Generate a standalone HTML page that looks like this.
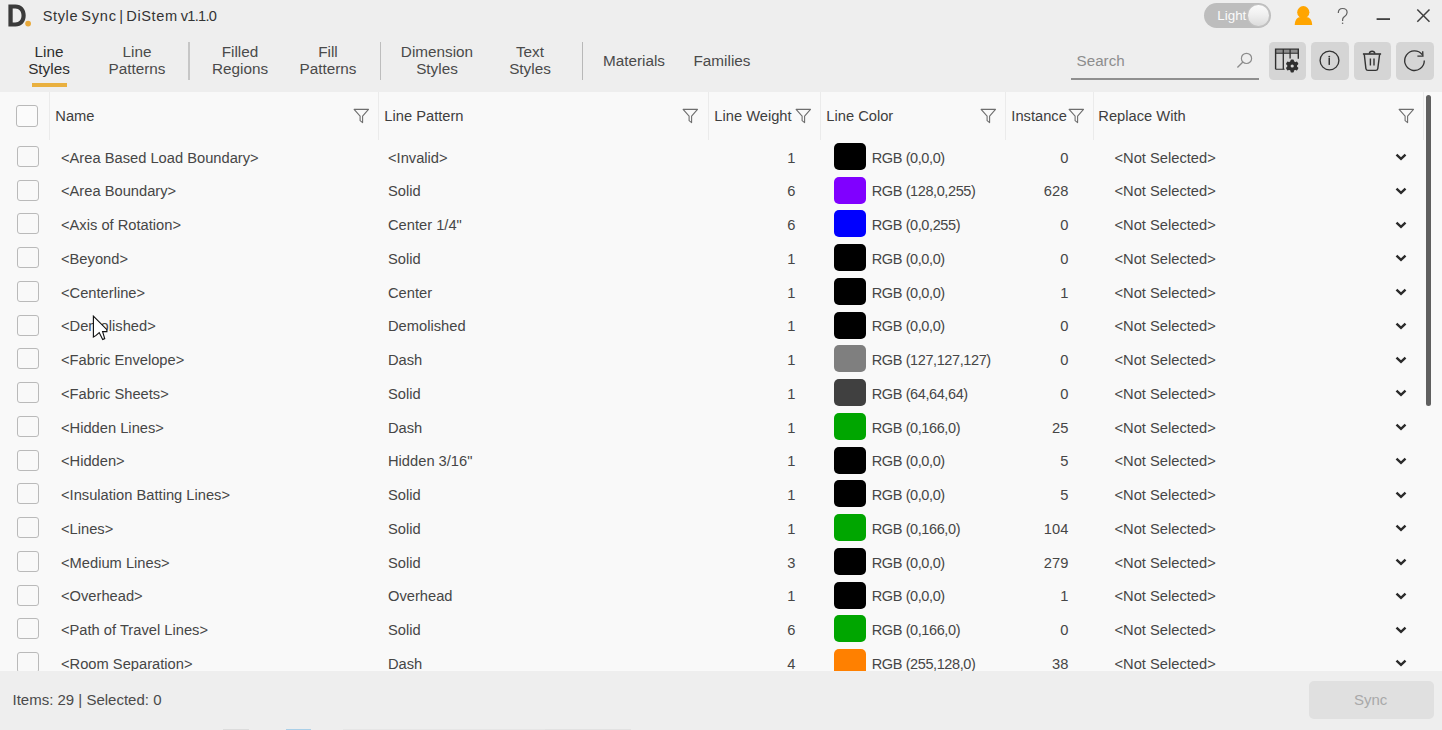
<!DOCTYPE html>
<html><head><meta charset="utf-8">
<style>
*{margin:0;padding:0;box-sizing:border-box}
html,body{width:1442px;height:730px;overflow:hidden;background:#eeeeee;
  font-family:"Liberation Sans",sans-serif;color:#333}
.abs{position:absolute}
#logo{position:absolute;left:6.5px;top:-1.5px;font-size:31.5px;line-height:36px;font-weight:bold;color:#3b3b3b}
#dot{position:absolute;left:25.3px;top:20.8px;width:5.6px;height:5.6px;border-radius:50%;background:#e9a93a}
#title{position:absolute;left:43px;top:7px;font-size:14.6px;line-height:18px;color:#333;white-space:nowrap}
#toggle{position:absolute;left:1204px;top:3px;width:67px;height:25px;border-radius:13px;background:#bdbdbd}
#toggle span{position:absolute;left:13.3px;top:5.2px;font-size:13.4px;line-height:16px;color:#fbfbfb}
#knob{position:absolute;left:1248.3px;top:5.4px;width:20.4px;height:20.4px;border-radius:50%;
  background:linear-gradient(#fbfbfb 0,#f0f0f0 45%,#dcdcdc 100%);box-shadow:0 0 0 1px #c2c2c2}
.tab{position:absolute;text-align:center;font-size:15.3px;line-height:17px;color:#4a4a4a;white-space:nowrap}
.tab.act{color:#2e2e2e}
.sep{position:absolute;top:42px;width:1.2px;height:37.8px;background:#bdbdbd}
#ul{position:absolute;left:32px;top:83px;width:35px;height:4px;background:#e9b03f}
#search{position:absolute;left:1076.6px;top:52px;font-size:15.2px;line-height:18px;color:#8d8d8d}
#sline{position:absolute;left:1071px;top:78.3px;width:188px;height:1.6px;background:#8f8f8f}
.btn{position:absolute;top:42px;height:38px;border-radius:4.5px;background:#d5d5d5}
#table{position:absolute;left:0;top:92px;width:1442px;height:579px;background:#f9f9f9;overflow:hidden}
#shadow{position:absolute;left:0;top:92px;width:1442px;height:4px;background:linear-gradient(#ececec,#f9f9f9)}
.hd{position:absolute;top:0;height:48px}
.csep{position:absolute;top:0;width:1px;height:48px;background:#ebebeb}
.ht{position:absolute;margin-left:-0.7px;top:16.3px;font-size:14.7px;line-height:17px;color:#3e3e3e;white-space:nowrap}
.fn{position:absolute;top:15.6px;margin-left:-0.8px}
.hcb{position:absolute;left:16.1px;top:12.8px;width:21.7px;height:22px;border:1.2px solid #b9b9b9;border-radius:3px;background:#fbfbfb}
.row{position:absolute;left:0;width:1442px;height:33.75px}
.cb{position:absolute;left:17.2px;top:6px;width:21.5px;height:20.6px;border:1.2px solid #bababa;border-radius:3px}
.t{position:absolute;top:10px;font-size:14.7px;line-height:17px;color:#464646;white-space:nowrap}
.nm{left:61px}
.pt{left:388px}
.wt{right:646.5px}
.rgb{left:871.8px;font-size:14.5px;letter-spacing:-0.4px}
.inst{right:373.70000000000005px}
.rep{left:1114.5px}
.sw{position:absolute;left:834px;top:3px;width:32px;height:27px;border-radius:5px}
.chev{position:absolute;left:1394.5px;top:13px}
#sb{position:absolute;left:1426px;top:3px;width:5px;height:311px;border-radius:2.5px;background:#606060}
#footer{position:absolute;left:0;top:671px;width:1442px;height:59px;background:#eeeeee}
#items{position:absolute;left:12.5px;top:20px;font-size:15px;line-height:17px;color:#4a4a4a;white-space:nowrap}
#sync{position:absolute;left:1309px;top:10px;width:125px;height:38px;border-radius:5px;background:#e0e0e0}
#sync span{position:absolute;left:45px;top:10px;font-size:15px;line-height:17px;color:#a9a9a9}
</style></head><body>
<svg class="abs" style="left:0;top:0" width="36" height="32" viewBox="0 0 36 32">
  <path fill-rule="evenodd" fill="#3b3b3b" d="M8.4,4.6 H15.4 C21.7,4.6 25.7,9.1 25.7,15.6 C25.7,22.1 21.7,26.6 15.4,26.6 H8.4 Z M12.7,8.6 H15.2 C19.3,8.6 21.5,11.5 21.5,15.6 C21.5,19.7 19.3,22.6 15.2,22.6 H12.7 Z"/>
  <circle cx="28.1" cy="23.6" r="2.9" fill="#e9a93a"/>
</svg>
<div id="title"><span style="position:absolute;left:-0.3px;letter-spacing:0.6px">Style</span><span style="position:absolute;left:38.2px;letter-spacing:0.8px">Sync</span><span style="position:absolute;left:76.3px">|</span><span style="position:absolute;left:83.3px;letter-spacing:0.6px">DiStem</span><span style="position:absolute;left:137.8px;letter-spacing:-0.75px">v1.1.0</span></div>
<div id="toggle"><span>Light</span></div><div id="knob"></div>
<svg class="abs" style="left:0;top:0" width="1442" height="32" viewBox="0 0 1442 32">
  <circle cx="1303.3" cy="12.2" r="6.1" fill="#ffa500"/>
  <path d="M1294.7,25.1 C1294.9,20 1297.3,17.1 1300.6,17.1 H1306.2 C1309.5,17.1 1312,20 1312.2,25.1 Z" fill="#ffa500"/>
  <path d="M1338.3,12.9 C1338.3,9.9 1340.2,8.5 1342.6,8.5 C1345.2,8.5 1347.1,10.2 1347.1,12.5 C1347.1,15 1345.3,16 1343.7,17.3 C1342.9,18 1342.6,18.8 1342.6,19.8 V20.9" fill="none" stroke="#606060" stroke-width="1.2"/>
  <circle cx="1342.6" cy="23.3" r="0.8" fill="#606060"/>
  <rect x="1376.6" y="18.2" width="13.4" height="1.8" fill="#404040"/>
  <path d="M1417.3,9.5 L1429.5,21.8 M1429.5,9.5 L1417.3,21.8" stroke="#404040" stroke-width="1.5"/>
</svg>

<div class="tab act" style="left:19px;top:43px;width:60px">Line<br>Styles</div>
<div id="ul"></div>
<div class="tab" style="left:97px;top:43px;width:80px">Line<br>Patterns</div>
<div class="sep" style="left:188.4px;width:1.5px;background:#c6c6c6"></div>
<div class="tab" style="left:200px;top:43px;width:80px">Filled<br>Regions</div>
<div class="tab" style="left:288px;top:43px;width:80px">Fill<br>Patterns</div>
<div class="sep" style="left:379.9px"></div>
<div class="tab" style="left:387px;top:43px;width:100px">Dimension<br>Styles</div>
<div class="tab" style="left:490px;top:43px;width:80px">Text<br>Styles</div>
<div class="sep" style="left:582px;width:1px;background:#b8b8b8"></div>
<div class="tab" style="left:594px;top:51.5px;width:80px">Materials</div>
<div class="tab" style="left:682px;top:51.5px;width:80px">Families</div>

<div id="search">Search</div>
<svg class="abs" style="left:1236px;top:51px" width="18" height="18" viewBox="0 0 18 18">
  <circle cx="10.5" cy="7.4" r="5.1" fill="none" stroke="#8c8c8c" stroke-width="1.2"/>
  <path d="M6.9,11 L1.4,16.5" stroke="#8c8c8c" stroke-width="1.3"/>
</svg>
<div id="sline"></div>

<div class="btn" style="left:1269px;width:37px"></div>
<div class="btn" style="left:1311px;width:38px"></div>
<div class="btn" style="left:1354px;width:37px"></div>
<div class="btn" style="left:1396px;width:38px"></div>
<svg class="abs" style="left:1269px;top:42px" width="37" height="38" viewBox="0 0 37 38">
  <rect x="6.6" y="7.4" width="22.6" height="3.9" fill="#8e8e8e"/>
  <path d="M6.6,27.3 V7.1 H29.3 V16.7" fill="none" stroke="#2f2f2f" stroke-width="1.4"/>
  <path d="M6.6,27.3 H15.6 M6.6,11.3 H29" fill="none" stroke="#2f2f2f" stroke-width="1.1"/>
  <path d="M14.3,7.1 V27.3 M21.1,7.1 V16.5" fill="none" stroke="#2f2f2f" stroke-width="1.3"/>
  <g transform="translate(23.2,24)">
    <circle r="5.0" fill="#2f2f2f"/>
    <g fill="#2f2f2f">
      <rect x="-1.7" y="-6.5" width="3.4" height="13" rx="1"/>
      <rect x="-1.7" y="-6.5" width="3.4" height="13" rx="1" transform="rotate(60)"/>
      <rect x="-1.7" y="-6.5" width="3.4" height="13" rx="1" transform="rotate(120)"/>
    </g>
    <circle r="1.6" fill="#d5d5d5"/>
  </g>
</svg>
<svg class="abs" style="left:1311px;top:42px" width="38" height="38" viewBox="0 0 38 38">
  <circle cx="18.5" cy="18.5" r="9.4" fill="none" stroke="#333" stroke-width="1.35"/>
  <rect x="17.5" y="15.9" width="1.5" height="7" fill="#333"/>
  <circle cx="18.25" cy="14.6" r="0.95" fill="#333"/>
</svg>
<svg class="abs" style="left:1354px;top:42px" width="37" height="38" viewBox="0 0 37 38">
  <path d="M8.9,12 H27.1" stroke="#333" stroke-width="1.6"/>
  <path d="M15.3,11.6 C15.5,9.9 16.6,9.3 18.1,9.3 C19.6,9.3 20.7,9.9 20.9,11.6" fill="none" stroke="#333" stroke-width="1.4"/>
  <path d="M10.3,12.3 L11.9,26.6 C12.1,27.8 12.8,28.4 14,28.4 H21.7 C22.9,28.4 23.6,27.8 23.8,26.6 L25.6,12.3" fill="none" stroke="#333" stroke-width="1.4"/>
  <path d="M16.4,16.6 V23.4 M20,16.6 V23.4" stroke="#333" stroke-width="1.4"/>
</svg>
<svg class="abs" style="left:1396px;top:42px" width="38" height="38" viewBox="0 0 38 38">
  <path d="M28.3,18.6 A9.8,9.8 0 1 1 26.2,12.6" fill="none" stroke="#333" stroke-width="1.35"/>
  <path d="M26.7,9.2 L26.9,14.1 L21.4,14.1" fill="none" stroke="#333" stroke-width="1.35"/>
</svg>

<div id="table">
  <div class="hcb"></div>
  <div class="csep" style="left:49px"></div>
  <div class="ht" style="left:56px">Name</div>
  <svg class="fn" style="left:353.5px" width="17" height="16" viewBox="0 0 17 16"><path d="M1.1,1.4 H15.5 L9.6,8.1 V14.6 L7.1,12.6 V8.1 Z" fill="none" stroke="#6e6e6e" stroke-width="1.1" stroke-linejoin="round"/></svg>
  <div class="csep" style="left:378px"></div>
  <div class="ht" style="left:385px">Line Pattern</div>
  <svg class="fn" style="left:682.5px" width="17" height="16" viewBox="0 0 17 16"><path d="M1.1,1.4 H15.5 L9.6,8.1 V14.6 L7.1,12.6 V8.1 Z" fill="none" stroke="#6e6e6e" stroke-width="1.1" stroke-linejoin="round"/></svg>
  <div class="csep" style="left:708px"></div>
  <div class="ht" style="left:715px">Line Weight</div>
  <svg class="fn" style="left:795.5px" width="17" height="16" viewBox="0 0 17 16"><path d="M1.1,1.4 H15.5 L9.6,8.1 V14.6 L7.1,12.6 V8.1 Z" fill="none" stroke="#6e6e6e" stroke-width="1.1" stroke-linejoin="round"/></svg>
  <div class="csep" style="left:820px"></div>
  <div class="ht" style="left:827px">Line Color</div>
  <svg class="fn" style="left:980.5px" width="17" height="16" viewBox="0 0 17 16"><path d="M1.1,1.4 H15.5 L9.6,8.1 V14.6 L7.1,12.6 V8.1 Z" fill="none" stroke="#6e6e6e" stroke-width="1.1" stroke-linejoin="round"/></svg>
  <div class="csep" style="left:1005px"></div>
  <div class="ht" style="left:1012px">Instance</div>
  <svg class="fn" style="left:1068.5px" width="17" height="16" viewBox="0 0 17 16"><path d="M1.1,1.4 H15.5 L9.6,8.1 V14.6 L7.1,12.6 V8.1 Z" fill="none" stroke="#6e6e6e" stroke-width="1.1" stroke-linejoin="round"/></svg>
  <div class="csep" style="left:1093px"></div>
  <div class="ht" style="left:1099px">Replace With</div>
  <svg class="fn" style="left:1398.5px" width="17" height="16" viewBox="0 0 17 16"><path d="M1.1,1.4 H15.5 L9.6,8.1 V14.6 L7.1,12.6 V8.1 Z" fill="none" stroke="#6e6e6e" stroke-width="1.1" stroke-linejoin="round"/></svg>
  <div class="csep" style="left:1423px"></div>
  <div style="position:absolute;left:0;top:-92px;width:1442px;height:730px">
  <div class="cb" style="top:146px"></div><span class="t nm" style="top:150px">&lt;Area Based Load Boundary&gt;</span><span class="t pt" style="top:150px">&lt;Invalid&gt;</span><span class="t wt" style="top:150px">1</span><div class="sw" style="top:143px;background:#000000"></div><span class="t rgb" style="top:150px">RGB (0,0,0)</span><span class="t inst" style="top:150px">0</span><span class="t rep" style="top:150px">&lt;Not Selected&gt;</span><svg class="chev" style="top:153px" width="12" height="8" viewBox="0 0 12 8"><path d="M1.5,1.6 L6,5.9 L10.5,1.6" fill="none" stroke="#2b2b2b" stroke-width="2.4"/></svg><div class="cb" style="top:180px"></div><span class="t nm" style="top:183px">&lt;Area Boundary&gt;</span><span class="t pt" style="top:183px">Solid</span><span class="t wt" style="top:183px">6</span><div class="sw" style="top:177px;background:#8000ff"></div><span class="t rgb" style="top:183px">RGB (128,0,255)</span><span class="t inst" style="top:183px">628</span><span class="t rep" style="top:183px">&lt;Not Selected&gt;</span><svg class="chev" style="top:187px" width="12" height="8" viewBox="0 0 12 8"><path d="M1.5,1.6 L6,5.9 L10.5,1.6" fill="none" stroke="#2b2b2b" stroke-width="2.4"/></svg><div class="cb" style="top:213px"></div><span class="t nm" style="top:217px">&lt;Axis of Rotation&gt;</span><span class="t pt" style="top:217px">Center 1/4"</span><span class="t wt" style="top:217px">6</span><div class="sw" style="top:210px;background:#0000ff"></div><span class="t rgb" style="top:217px">RGB (0,0,255)</span><span class="t inst" style="top:217px">0</span><span class="t rep" style="top:217px">&lt;Not Selected&gt;</span><svg class="chev" style="top:221px" width="12" height="8" viewBox="0 0 12 8"><path d="M1.5,1.6 L6,5.9 L10.5,1.6" fill="none" stroke="#2b2b2b" stroke-width="2.4"/></svg><div class="cb" style="top:247px"></div><span class="t nm" style="top:251px">&lt;Beyond&gt;</span><span class="t pt" style="top:251px">Solid</span><span class="t wt" style="top:251px">1</span><div class="sw" style="top:244px;background:#000000"></div><span class="t rgb" style="top:251px">RGB (0,0,0)</span><span class="t inst" style="top:251px">0</span><span class="t rep" style="top:251px">&lt;Not Selected&gt;</span><svg class="chev" style="top:254px" width="12" height="8" viewBox="0 0 12 8"><path d="M1.5,1.6 L6,5.9 L10.5,1.6" fill="none" stroke="#2b2b2b" stroke-width="2.4"/></svg><div class="cb" style="top:281px"></div><span class="t nm" style="top:285px">&lt;Centerline&gt;</span><span class="t pt" style="top:285px">Center</span><span class="t wt" style="top:285px">1</span><div class="sw" style="top:278px;background:#000000"></div><span class="t rgb" style="top:285px">RGB (0,0,0)</span><span class="t inst" style="top:285px">1</span><span class="t rep" style="top:285px">&lt;Not Selected&gt;</span><svg class="chev" style="top:288px" width="12" height="8" viewBox="0 0 12 8"><path d="M1.5,1.6 L6,5.9 L10.5,1.6" fill="none" stroke="#2b2b2b" stroke-width="2.4"/></svg><div class="cb" style="top:315px"></div><span class="t nm" style="top:318px">&lt;Demolished&gt;</span><span class="t pt" style="top:318px">Demolished</span><span class="t wt" style="top:318px">1</span><div class="sw" style="top:312px;background:#000000"></div><span class="t rgb" style="top:318px">RGB (0,0,0)</span><span class="t inst" style="top:318px">0</span><span class="t rep" style="top:318px">&lt;Not Selected&gt;</span><svg class="chev" style="top:322px" width="12" height="8" viewBox="0 0 12 8"><path d="M1.5,1.6 L6,5.9 L10.5,1.6" fill="none" stroke="#2b2b2b" stroke-width="2.4"/></svg><div class="cb" style="top:348px"></div><span class="t nm" style="top:352px">&lt;Fabric Envelope&gt;</span><span class="t pt" style="top:352px">Dash</span><span class="t wt" style="top:352px">1</span><div class="sw" style="top:345px;background:#7f7f7f"></div><span class="t rgb" style="top:352px">RGB (127,127,127)</span><span class="t inst" style="top:352px">0</span><span class="t rep" style="top:352px">&lt;Not Selected&gt;</span><svg class="chev" style="top:356px" width="12" height="8" viewBox="0 0 12 8"><path d="M1.5,1.6 L6,5.9 L10.5,1.6" fill="none" stroke="#2b2b2b" stroke-width="2.4"/></svg><div class="cb" style="top:382px"></div><span class="t nm" style="top:386px">&lt;Fabric Sheets&gt;</span><span class="t pt" style="top:386px">Solid</span><span class="t wt" style="top:386px">1</span><div class="sw" style="top:379px;background:#404040"></div><span class="t rgb" style="top:386px">RGB (64,64,64)</span><span class="t inst" style="top:386px">0</span><span class="t rep" style="top:386px">&lt;Not Selected&gt;</span><svg class="chev" style="top:389px" width="12" height="8" viewBox="0 0 12 8"><path d="M1.5,1.6 L6,5.9 L10.5,1.6" fill="none" stroke="#2b2b2b" stroke-width="2.4"/></svg><div class="cb" style="top:416px"></div><span class="t nm" style="top:420px">&lt;Hidden Lines&gt;</span><span class="t pt" style="top:420px">Dash</span><span class="t wt" style="top:420px">1</span><div class="sw" style="top:413px;background:#00a600"></div><span class="t rgb" style="top:420px">RGB (0,166,0)</span><span class="t inst" style="top:420px">25</span><span class="t rep" style="top:420px">&lt;Not Selected&gt;</span><svg class="chev" style="top:423px" width="12" height="8" viewBox="0 0 12 8"><path d="M1.5,1.6 L6,5.9 L10.5,1.6" fill="none" stroke="#2b2b2b" stroke-width="2.4"/></svg><div class="cb" style="top:450px"></div><span class="t nm" style="top:453px">&lt;Hidden&gt;</span><span class="t pt" style="top:453px">Hidden 3/16"</span><span class="t wt" style="top:453px">1</span><div class="sw" style="top:447px;background:#000000"></div><span class="t rgb" style="top:453px">RGB (0,0,0)</span><span class="t inst" style="top:453px">5</span><span class="t rep" style="top:453px">&lt;Not Selected&gt;</span><svg class="chev" style="top:457px" width="12" height="8" viewBox="0 0 12 8"><path d="M1.5,1.6 L6,5.9 L10.5,1.6" fill="none" stroke="#2b2b2b" stroke-width="2.4"/></svg><div class="cb" style="top:483px"></div><span class="t nm" style="top:487px">&lt;Insulation Batting Lines&gt;</span><span class="t pt" style="top:487px">Solid</span><span class="t wt" style="top:487px">1</span><div class="sw" style="top:480px;background:#000000"></div><span class="t rgb" style="top:487px">RGB (0,0,0)</span><span class="t inst" style="top:487px">5</span><span class="t rep" style="top:487px">&lt;Not Selected&gt;</span><svg class="chev" style="top:491px" width="12" height="8" viewBox="0 0 12 8"><path d="M1.5,1.6 L6,5.9 L10.5,1.6" fill="none" stroke="#2b2b2b" stroke-width="2.4"/></svg><div class="cb" style="top:517px"></div><span class="t nm" style="top:521px">&lt;Lines&gt;</span><span class="t pt" style="top:521px">Solid</span><span class="t wt" style="top:521px">1</span><div class="sw" style="top:514px;background:#00a600"></div><span class="t rgb" style="top:521px">RGB (0,166,0)</span><span class="t inst" style="top:521px">104</span><span class="t rep" style="top:521px">&lt;Not Selected&gt;</span><svg class="chev" style="top:524px" width="12" height="8" viewBox="0 0 12 8"><path d="M1.5,1.6 L6,5.9 L10.5,1.6" fill="none" stroke="#2b2b2b" stroke-width="2.4"/></svg><div class="cb" style="top:551px"></div><span class="t nm" style="top:555px">&lt;Medium Lines&gt;</span><span class="t pt" style="top:555px">Solid</span><span class="t wt" style="top:555px">3</span><div class="sw" style="top:548px;background:#000000"></div><span class="t rgb" style="top:555px">RGB (0,0,0)</span><span class="t inst" style="top:555px">279</span><span class="t rep" style="top:555px">&lt;Not Selected&gt;</span><svg class="chev" style="top:558px" width="12" height="8" viewBox="0 0 12 8"><path d="M1.5,1.6 L6,5.9 L10.5,1.6" fill="none" stroke="#2b2b2b" stroke-width="2.4"/></svg><div class="cb" style="top:585px"></div><span class="t nm" style="top:588px">&lt;Overhead&gt;</span><span class="t pt" style="top:588px">Overhead</span><span class="t wt" style="top:588px">1</span><div class="sw" style="top:582px;background:#000000"></div><span class="t rgb" style="top:588px">RGB (0,0,0)</span><span class="t inst" style="top:588px">1</span><span class="t rep" style="top:588px">&lt;Not Selected&gt;</span><svg class="chev" style="top:592px" width="12" height="8" viewBox="0 0 12 8"><path d="M1.5,1.6 L6,5.9 L10.5,1.6" fill="none" stroke="#2b2b2b" stroke-width="2.4"/></svg><div class="cb" style="top:618px"></div><span class="t nm" style="top:622px">&lt;Path of Travel Lines&gt;</span><span class="t pt" style="top:622px">Solid</span><span class="t wt" style="top:622px">6</span><div class="sw" style="top:615px;background:#00a600"></div><span class="t rgb" style="top:622px">RGB (0,166,0)</span><span class="t inst" style="top:622px">0</span><span class="t rep" style="top:622px">&lt;Not Selected&gt;</span><svg class="chev" style="top:626px" width="12" height="8" viewBox="0 0 12 8"><path d="M1.5,1.6 L6,5.9 L10.5,1.6" fill="none" stroke="#2b2b2b" stroke-width="2.4"/></svg><div class="cb" style="top:652px"></div><span class="t nm" style="top:656px">&lt;Room Separation&gt;</span><span class="t pt" style="top:656px">Dash</span><span class="t wt" style="top:656px">4</span><div class="sw" style="top:649px;background:#ff8000"></div><span class="t rgb" style="top:656px">RGB (255,128,0)</span><span class="t inst" style="top:656px">38</span><span class="t rep" style="top:656px">&lt;Not Selected&gt;</span><svg class="chev" style="top:659px" width="12" height="8" viewBox="0 0 12 8"><path d="M1.5,1.6 L6,5.9 L10.5,1.6" fill="none" stroke="#2b2b2b" stroke-width="2.4"/></svg>
  </div>
  <div id="sb"></div>
</div>


<div id="footer">
  <div id="items">Items: 29 | Selected: 0</div>
  <div id="sync"><span>Sync</span></div>
</div>
<div class="abs" style="left:223px;top:729px;width:26px;height:1px;background:#dcdcdc"></div>
<div class="abs" style="left:286px;top:729px;width:25px;height:1px;background:#a9cfe8"></div>
<div class="abs" style="left:343px;top:729px;width:202px;height:1px;background:#e6e6e6"></div>
<div class="abs" style="left:545px;top:729px;width:86px;height:1px;background:#e2e2e2"></div>
<svg class="abs" style="left:92px;top:315px" width="18" height="27" viewBox="0 0 18 27">
  <path d="M1.4,1.2 L14.9,14.7 V16.6 H10.6 L12.7,23.6 L10.7,24.6 L7.2,17.6 L4.1,20.4 L1.4,21.9 Z" fill="#fff" stroke="#111" stroke-width="1.15" stroke-linejoin="miter"/>
</svg>
</body></html>
